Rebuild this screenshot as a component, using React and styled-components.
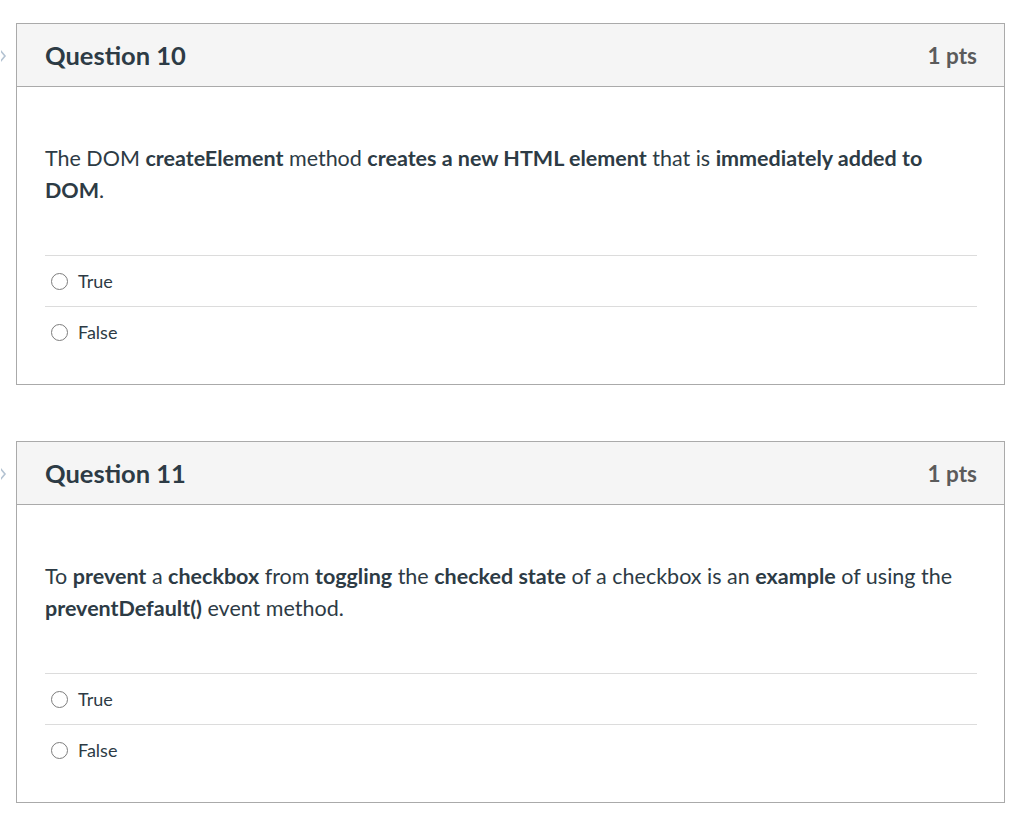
import React from 'react';
import styled, { createGlobalStyle } from 'styled-components';

const GlobalStyle = createGlobalStyle`
  body {
    margin: 0;
    background: #fff;
    font-family: Lato, "Open Sans", "Liberation Sans", sans-serif;
    color: #2d3b45;
  }
`;

const questions = [
  {
    id: 10,
    points: 1,
    text: (
      <>
        The DOM <b>createElement</b> method <b>creates a new HTML element</b> that is{' '}
        <b>immediately added to</b> <b>DOM</b>.
      </>
    ),
    answers: ['True', 'False'],
  },
  {
    id: 11,
    points: 1,
    text: (
      <>
        To <b>prevent</b> a <b>checkbox</b> from <b>toggling</b> the <b>checked state</b> of a
        checkbox is an <b>example</b> of using the <b>preventDefault()</b> event method.
      </>
    ),
    answers: ['True', 'False'],
  },
];

const App = () => {
  return (
    <>
      <GlobalStyle />
      <Page>
        {questions.map((q) => (
          <Question key={q.id}>
            <Marker width="6" height="18" viewBox="0 0 6 18">
              <path d="M-2 2 L4 9 L-2 16" fill="none" stroke="#b4c3d2" strokeWidth="1.6" />
            </Marker>
            <Header>
              <Title>Question {q.id}</Title>
              <Points>{q.points} pts</Points>
            </Header>
            <Body>
              <Text>{q.text}</Text>
              <Answers>
                {q.answers.map((a) => (
                  <Answer key={a}>
                    <Radio />
                    <Label>{a}</Label>
                  </Answer>
                ))}
              </Answers>
            </Body>
          </Question>
        ))}
      </Page>
    </>
  );
};

export default App;

const Page = styled.div`
  display: flex;
  flex-direction: column;
  gap: 56px;
  padding: 23px 19px 0 16px;
`;

const Question = styled.div`
  position: relative;
  border: 1px solid #aaaaaa;
  background: #fff;
`;

const Marker = styled.svg`
  position: absolute;
  left: -16px;
  top: 23px;
`;

const Header = styled.div`
  display: flex;
  align-items: center;
  justify-content: space-between;
  height: 62px;
  padding: 0 27px 0 28px;
  background: #f5f5f5;
  border-bottom: 1px solid #aaaaaa;
`;

const Title = styled.h2`
  margin: 0;
  font-size: 25.5px;
  font-weight: 700;
  color: #2d3b45;
`;

const Points = styled.div`
  font-size: 22.5px;
  font-weight: 700;
  color: #5b5b5b;
`;

const Body = styled.div`
  padding: 55px 27px 27px 28px;
`;

const Text = styled.div`
  font-size: 21.5px;
  line-height: 32px;
  color: #2d3b45;
  margin-bottom: 49px;

  b {
    font-weight: 700;
  }
`;

const Answers = styled.div`
  display: flex;
  flex-direction: column;
`;

const Answer = styled.label`
  display: flex;
  align-items: center;
  gap: 10px;
  height: 50px;
  padding-left: 6px;
  border-top: 1px solid #dcdcdc;
`;

const Radio = styled.span`
  width: 15px;
  height: 15px;
  border: 1px solid #7d7d7d;
  border-radius: 50%;
  background: #fff;
`;

const Label = styled.span`
  font-size: 18px;
  color: #2d3b45;
`;
